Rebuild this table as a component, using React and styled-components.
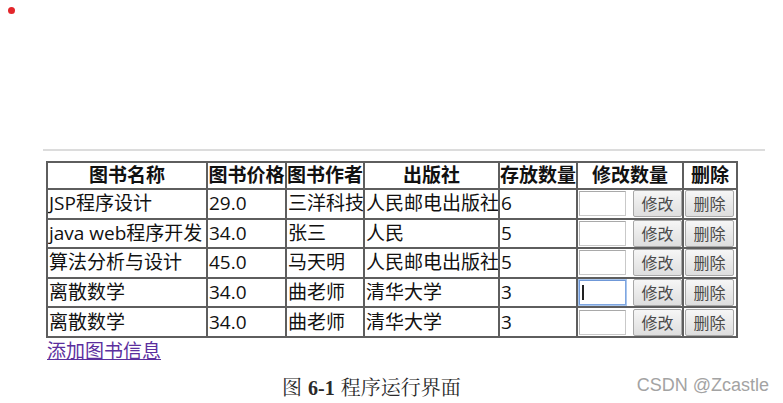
import React from "react";
import styled, { createGlobalStyle } from "styled-components";

const Global = createGlobalStyle`
  html, body { margin: 0; padding: 0; background: #fff; }
  body { font-family: "Open Sans", "Noto Sans CJK SC", sans-serif; }
`;

const Page = styled.div`
  position: relative;
  width: 783px;
  height: 403px;
  overflow: hidden;
  background: #fff;
`;

const Dot = styled.div`
  width: 7px;
  height: 7px;
  border-radius: 50%;
  background: #e3262b;
  margin: 7px 0 0 8px;
`;

const Rule = styled.div`
  margin: 135px 0 0 43px;
  width: 722px;
  height: 2px;
  background: #dcdcdc;
`;

const Table = styled.table`
  margin: 10px 0 0 46px;
  border-collapse: collapse;
  table-layout: fixed;
  width: 690px;
  border: 2px solid #5e5e5e;
  font-family: "Open Sans", "Noto Sans CJK SC", sans-serif;
  font-size: 19px;
  color: #111;
`;

const Th = styled.th`
  border: 2px solid #5e5e5e;
  height: 25px;
  padding: 0;
  font-weight: 700;
  line-height: 25px;
  text-align: center;
  white-space: nowrap;
  overflow: hidden;
`;

const Td = styled.td`
  border: 2px solid #5e5e5e;
  height: 27.6px;
  padding: 0 0 0 1px;
  line-height: 27px;
  white-space: nowrap;
  overflow: hidden;
  vertical-align: middle;
`;

const Controls = styled.div`
  display: flex;
  align-items: center;
  gap: ${(p) => p.$gap || 0}px;
`;

const InputWrap = styled.span`
  position: relative;
  display: inline-flex;
`;

const Qty = styled.input`
  box-sizing: border-box;
  width: 47px;
  height: 25px;
  margin: 0;
  padding: 0;
  background: #fff;
  border: 1px solid ${(p) => (p.$focused ? "#7fa6e0" : "#c9c9c9")};
  border-top-color: ${(p) => (p.$focused ? "#6f98d8" : "#a9a9a9")};
  border-left-color: ${(p) => (p.$focused ? "#6f98d8" : "#b5b5b5")};
  box-shadow: ${(p) => (p.$focused ? "0 0 0 1px #a9c6ee" : "none")};
  outline: none;
`;

const Caret = styled.span`
  position: absolute;
  left: 3px;
  top: 5px;
  width: 2px;
  height: 15px;
  background: #222;
`;

const Btn = styled.button`
  box-sizing: border-box;
  width: 49px;
  height: 27px;
  margin: 0;
  padding: 0;
  border: 1px solid #a8a8a8;
  border-radius: 2px;
  background: linear-gradient(#f6f6f6, #dedede);
  font-family: "Noto Sans CJK SC", sans-serif;
  font-size: 16px;
  line-height: 25px;
  color: #4a4a4a;
`;

const AddLink = styled.a`
  display: block;
  margin: 1px 0 0 47px;
  width: max-content;
  font-family: "Noto Sans CJK SC", sans-serif;
  font-size: 19px;
  line-height: 22px;
  color: #5b2f9e;
  text-decoration: underline;
`;

const Caption = styled.div`
  margin: 15px 0 0 282px;
  font-family: "Liberation Serif", "Noto Serif CJK SC", "Noto Sans CJK SC", serif;
  font-size: 20px;
  line-height: 24px;
  color: #2a2a2a;
  word-spacing: 1px;
`;

const Num = styled.span`
  font-weight: 700;
`;

const Watermark = styled.div`
  position: absolute;
  right: 14px;
  bottom: 7px;
  font-family: "Liberation Sans", sans-serif;
  font-size: 18px;
  color: #a3a3a3;
`;

const widths = [160, 79, 78, 135, 78, 106, 54];
const headers = ["图书名称", "图书价格", "图书作者", "出版社", "存放数量", "修改数量", "删除"];
const rows = [
  ["JSP程序设计", "29.0", "三洋科技", "人民邮电出版社", "6"],
  ["java web程序开发", "34.0", "张三", "人民", "5"],
  ["算法分析与设计", "45.0", "马天明", "人民邮电出版社", "5"],
  ["离散数学", "34.0", "曲老师", "清华大学", "3"],
  ["离散数学", "34.0", "曲老师", "清华大学", "3"],
];

export default function App() {
  return (
    <Page>
      <Global />
      <Dot />
      <Rule />
      <Table>
        <colgroup>
          {widths.map((w, i) => (
            <col key={i} style={{ width: w }} />
          ))}
        </colgroup>
        <thead>
          <tr>
            {headers.map((h) => (
              <Th key={h}>{h}</Th>
            ))}
          </tr>
        </thead>
        <tbody>
          {rows.map((r, i) => (
            <tr key={i}>
              {r.map((c, j) => (
                <Td key={j}>{c}</Td>
              ))}
              <Td>
                <Controls $gap={7}>
                  <InputWrap>
                    <Qty readOnly $focused={i === 3} />
                    {i === 3 && <Caret />}
                  </InputWrap>
                  <Btn>修改</Btn>
                </Controls>
              </Td>
              <Td>
                <Controls>
                  <Btn>删除</Btn>
                </Controls>
              </Td>
            </tr>
          ))}
        </tbody>
      </Table>
      <AddLink href="#">添加图书信息</AddLink>
      <Caption>
        图 <Num>6-1</Num> 程序运行界面
      </Caption>
      <Watermark>CSDN @Zcastle</Watermark>
    </Page>
  );
}
